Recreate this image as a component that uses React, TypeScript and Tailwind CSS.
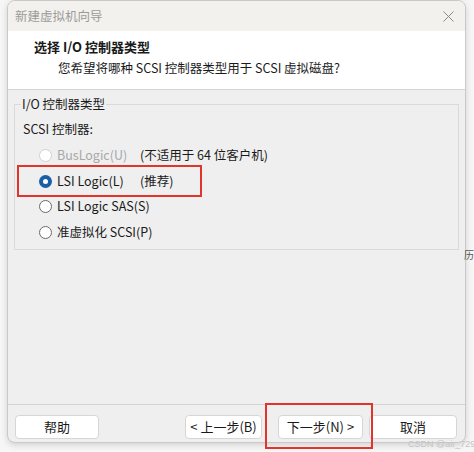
import React from "react";

const font = { fontFamily: '"Noto Sans CJK SC", "Noto Sans", sans-serif' };

function Radio({ checked, disabled }: { checked?: boolean; disabled?: boolean }) {
  if (checked) {
    return (
      <span className="flex h-[13px] w-[13px] items-center justify-center rounded-full bg-[#1a5ea8]">
        <span className="block h-[5px] w-[5px] rounded-full bg-white" />
      </span>
    );
  }
  return (
    <span
      className={
        "block h-[13px] w-[13px] rounded-full border bg-white " +
        (disabled ? "border-[#d2d2d2]" : "border-[#6b6b6b]")
      }
    />
  );
}

function Btn({ label, w }: { label: string; w: string }) {
  return (
    <div
      className={
        "flex h-[24px] items-center justify-center rounded-[4px] border border-[#d6d6d6] bg-white text-[13px] text-[#1a1a1a] " +
        w
      }
    >
      {label}
    </div>
  );
}

export default function App() {
  return (
    <div className="relative h-[452px] w-[474px] overflow-hidden bg-[#f6f6f6]" style={font}>
      <div className="ml-[7px] flex h-[443px] w-[459px] flex-col overflow-hidden rounded-b-[8px] rounded-t-[8px] border border-[#c9c9c9] bg-[#efefef] shadow-[0_2px_6px_rgba(0,0,0,0.15)]">
        {/* title bar */}
        <div className="flex h-[30px] shrink-0 items-center justify-between bg-[#f3f1ed] pl-[7px] pr-[10px]">
          <span className="text-[12.5px] text-[#9b9b9b]">新建虚拟机向导</span>
          <svg width="11" height="11" viewBox="0 0 11 11" className="mr-[1px]">
            <path d="M0.5 0.5 L10.5 10.5 M10.5 0.5 L0.5 10.5" stroke="#8a8a8a" strokeWidth="1" />
          </svg>
        </div>
        {/* header */}
        <div className="flex h-[59px] shrink-0 flex-col border-b border-[#d4d4d4] bg-white pl-[26px] pt-[6px]">
          <span className="text-[13px] font-bold leading-[20px] text-[#1a1a1a]">选择 I/O 控制器类型</span>
          <span className="pl-[24px] text-[12.5px] leading-[22px] text-[#1a1a1a]">
            您希望将哪种 SCSI 控制器类型用于 SCSI 虚拟磁盘?
          </span>
        </div>
        {/* body */}
        <div className="flex-1 px-[6px] pt-[6px]">
          <fieldset className="h-[154px] w-[445px] border border-[#dadada] pl-[8px] pr-[6px]">
            <legend className="ml-[-2px] px-[1px] text-[12.5px] leading-[16px] text-[#1a1a1a]">I/O 控制器类型</legend>
            <div className="mt-[8px] text-[12.5px] leading-[18px] text-[#1a1a1a]">SCSI 控制器:</div>
            <div className="mt-[5px] flex flex-col text-[12.5px] text-[#1a1a1a]">
              <div className="flex h-[25.5px] items-center">
                <span className="ml-[16px] mr-[5px]"><Radio disabled /></span>
                <span className="w-[83px] text-[#a8a8a8]">BusLogic(U)</span>
                <span>(不适用于 64 位客户机)</span>
              </div>
              <div className="flex h-[25.5px] items-center">
                <span className="ml-[16px] mr-[5px]"><Radio checked /></span>
                <span className="w-[83px]">LSI Logic(L)</span>
                <span>(推荐)</span>
              </div>
              <div className="flex h-[25.5px] items-center">
                <span className="ml-[16px] mr-[5px]"><Radio /></span>
                <span>LSI Logic SAS(S)</span>
              </div>
              <div className="flex h-[25.5px] items-center">
                <span className="ml-[16px] mr-[5px]"><Radio /></span>
                <span>准虚拟化 SCSI(P)</span>
              </div>
            </div>
          </fieldset>
        </div>
        {/* footer */}
        <div className="flex h-[38px] shrink-0 items-start border-t border-[#d4d4d4] pl-[7px] pt-[10px]">
          <Btn label="帮助" w="w-[84px]" />
          <div className="ml-[86px]"><Btn label="< 上一步(B)" w="w-[77px]" /></div>
          <div className="ml-[16px]"><Btn label="下一步(N) >" w="w-[85px]" /></div>
          <div className="ml-[6px]"><Btn label="取消" w="w-[88px]" /></div>
        </div>
      </div>

      {/* annotations */}
      <div className="absolute left-[17px] top-[165px] h-[32px] w-[185px] border-[2px] border-[#e0342c]" />
      <div className="absolute left-[265px] top-[403px] h-[46px] w-[108px] border-[2px] border-[#e0342c]" />
      <span className="absolute left-[464px] top-[248px] text-[10px] leading-[14px] text-[#555]">历</span>
      <span className="absolute left-[408px] top-[439px] whitespace-nowrap text-[9px] leading-[11px] text-[#c4c4c4]" style={{ fontFamily: '"Liberation Sans", sans-serif' }}>CSDN @air_729</span>
    </div>
  );
}
